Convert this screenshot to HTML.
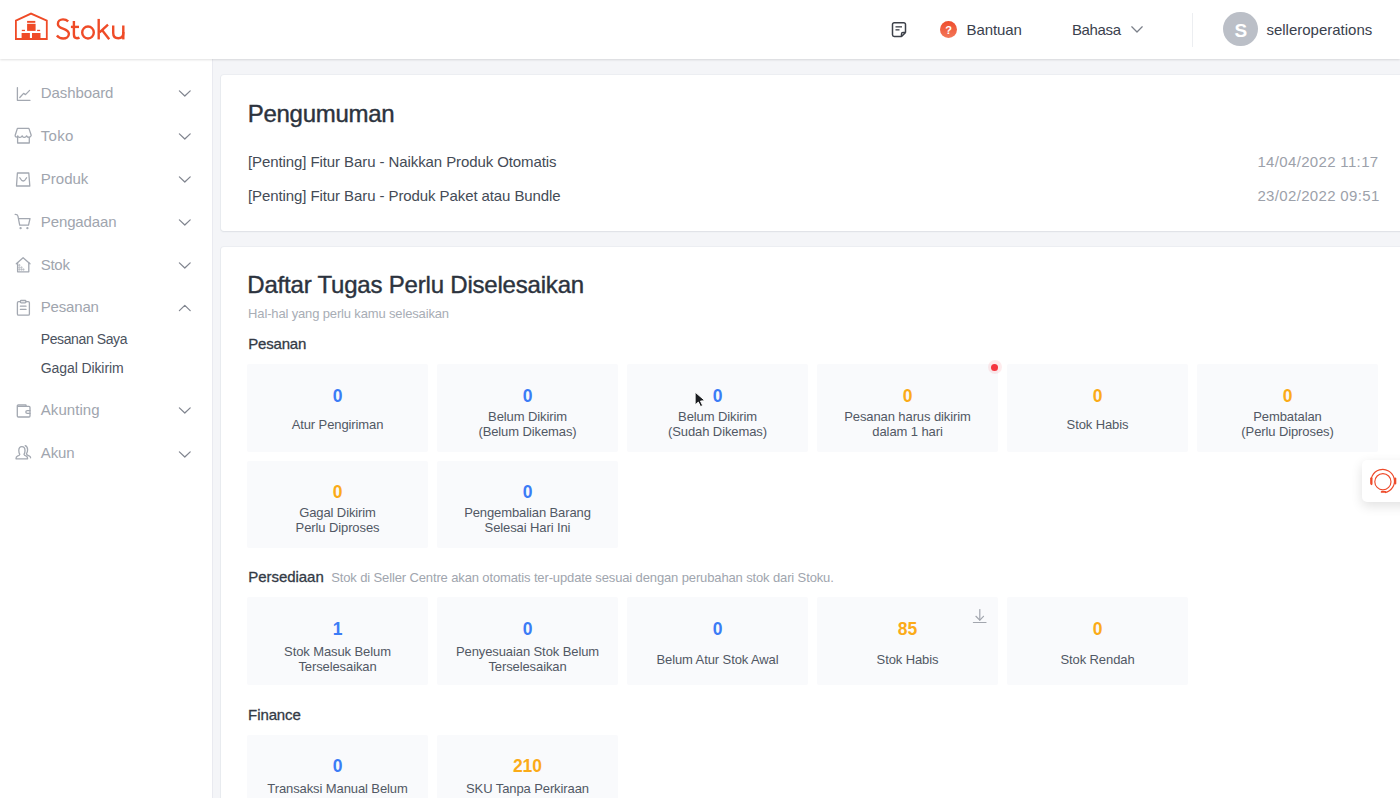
<!DOCTYPE html>
<html><head><meta charset="utf-8"><title>Stoku</title>
<style>
*{box-sizing:border-box;margin:0;padding:0}
html,body{width:1400px;height:798px;overflow:hidden;background:#f4f5f8;font-family:"Liberation Sans",sans-serif}
.t{position:absolute;white-space:nowrap;line-height:1}
.a{position:absolute}
.hdr{position:absolute;left:0;top:0;width:1400px;height:59px;background:#fff;box-shadow:0 1px 2px rgba(0,0,0,0.12);z-index:5}
.side{position:absolute;left:0;top:59px;width:213px;height:739px;background:#fff;border-right:1px solid #e9eaf0;z-index:3}
.card{position:absolute;background:#fff;border-radius:3px;box-shadow:0 0 0 1px rgba(40,50,80,0.035),0 1px 2px rgba(40,50,70,0.07)}
.tile{position:absolute;background:#f9fafc;border-radius:2px}
.num{position:absolute;left:0;width:100%;text-align:center;font-size:17.5px;font-weight:bold;line-height:1;white-space:nowrap}
.lb{position:absolute;left:0;width:100%;text-align:center;font-size:13px;line-height:15px;color:#515864;letter-spacing:-0.1px;white-space:nowrap}
.blue{color:#3b7cf6}.orange{color:#fbab18}
.ic{position:absolute;fill:none;stroke:#a3a8b1;stroke-width:1.3;stroke-linecap:round;stroke-linejoin:round}
.chev{position:absolute;fill:none;stroke:#80858f;stroke-width:1.25;stroke-linecap:round;stroke-linejoin:round}
</style></head><body>
<div class="hdr">
<svg class="a" style="left:12px;top:10px" width="40" height="34" viewBox="12 10 40 34">
<path d="M15.9 39 V20.6 L31 13.6 L46.8 20.6 V39 Z" fill="none" stroke="#ef4b27" stroke-width="1.8" stroke-linejoin="miter"/>
<rect x="27.1" y="20.9" width="8.2" height="1.9" fill="#ef4b27"/>
<rect x="27.1" y="23.8" width="8.5" height="7.1" fill="#ef4b27"/>
<rect x="21.8" y="29.8" width="3.2" height="1.3" fill="#ef4b27"/>
<rect x="37.1" y="29.8" width="3" height="1.3" fill="#ef4b27"/>
<rect x="21.6" y="33" width="8.3" height="6.5" fill="#ef4b27"/>
<rect x="32" y="33" width="8.5" height="6.5" fill="#ef4b27"/>
</svg>
<svg class="a" style="left:52px;top:14px" width="76" height="30" viewBox="52 14 76 30" fill="none" stroke="#ef4b27" stroke-width="2.4">
<path d="M68.2 21.4 C66.6 19.9 64.9 19.4 63 19.4 C60 19.4 57.9 21.3 57.9 23.9 C57.9 26.6 60.2 27.6 63 28.6 C66.2 29.7 68.9 30.8 68.9 33.8 C68.9 36.7 66.3 38.5 63.2 38.5 C60.6 38.5 58.3 37.3 56.9 35.5"/>
<path d="M73.9 20.9 V34.6 Q73.9 38.3 77 38.3 Q78.4 38.3 79.4 37.6"/><path d="M70.9 26.9 H79"/>
<ellipse cx="88" cy="32.5" rx="5.8" ry="6"/>
<path d="M98.7 18.9 V39.4"/><path d="M108 24.6 L99.6 32.4"/><path d="M102.4 30.6 L109.2 39.2"/>
<path d="M113.2 25.6 V33 Q113.2 38.3 118.3 38.3 Q123.3 38.3 123.3 33 V25.6"/><path d="M123.3 32 V39.4"/>
</svg>
<svg class="a" style="left:890px;top:20px" width="18" height="19" viewBox="890 20 18 19">
<path d="M894.2 22.7 H903.8 A1.7 1.7 0 0 1 905.5 24.4 V32.3 L901.3 36.5 H894.2 A1.7 1.7 0 0 1 892.5 34.8 V24.4 A1.7 1.7 0 0 1 894.2 22.7 Z" fill="none" stroke="#3c4049" stroke-width="1.5"/>
<path d="M905.3 32.5 H903 A1.6 1.6 0 0 0 901.4 34.1 V36.3" fill="#fff" stroke="#3c4049" stroke-width="1.3" stroke-linejoin="round"/><path d="M905.2 32.7 L901.6 36.3" stroke="#3c4049" stroke-width="1.4"/>
<rect x="895.5" y="26.2" width="6.5" height="1.3" fill="#3c4049"/>
<rect x="895.5" y="29.2" width="4" height="1.3" fill="#3c4049"/>
</svg>
<div class="a" style="left:939.5px;top:20.8px;width:17.2px;height:17.2px;border-radius:50%;background:linear-gradient(#ee4c2c,#f3785a)"></div>
<div class="t" style="left:945.20px;top:24.59px;font-size:11px;color:#fff;font-weight:bold;">?</div>
<div class="t" style="left:966.50px;top:22.30px;font-size:15px;color:#3a414d;letter-spacing:-0.1px;">Bantuan</div>
<div class="t" style="left:1071.90px;top:22.30px;font-size:15px;color:#3a414d;letter-spacing:-0.35px;">Bahasa</div>
<svg class="chev" style="left:1130px;top:24px;stroke:#7a7f89" width="14" height="10" viewBox="1130 24 14 10"><path d="M1131.8 26.8 L1137 32 L1142.2 26.8"/></svg>
<div class="a" style="left:1192px;top:13px;width:1px;height:34px;background:#eceef1"></div>
<div class="a" style="left:1223.2px;top:11.6px;width:34.6px;height:34.6px;border-radius:50%;background:#bbbfc7"></div>
<div class="t" style="left:1234.60px;top:20.72px;font-size:19px;color:#fff;font-weight:bold;">S</div>
<div class="t" style="left:1266.40px;top:22.30px;font-size:15px;color:#3a414d;">selleroperations</div>
</div>
<div class="side">
</div>
<div class="a" style="left:0;top:0;z-index:4">
<div class="t" style="left:40.80px;top:84.90px;font-size:15px;color:#a0a5ae;letter-spacing:-0.1px;">Dashboard</div>
<svg class="chev" style="left:177px;top:89.2px" width="16" height="9" viewBox="177 89.2 16 9"><path d="M179.4 91.1 L184.8 96.2 L190.2 91.1"/></svg>
<div class="t" style="left:40.80px;top:127.70px;font-size:15px;color:#a0a5ae;letter-spacing:0.3px;">Toko</div>
<svg class="chev" style="left:177px;top:132.0px" width="16" height="9" viewBox="177 132.0 16 9"><path d="M179.4 133.9 L184.8 139.0 L190.2 133.9"/></svg>
<div class="t" style="left:40.80px;top:170.60px;font-size:15px;color:#a0a5ae;">Produk</div>
<svg class="chev" style="left:177px;top:174.9px" width="16" height="9" viewBox="177 174.9 16 9"><path d="M179.4 176.8 L184.8 181.9 L190.2 176.8"/></svg>
<div class="t" style="left:40.80px;top:213.50px;font-size:15px;color:#a0a5ae;letter-spacing:-0.12px;">Pengadaan</div>
<svg class="chev" style="left:177px;top:217.8px" width="16" height="9" viewBox="177 217.8 16 9"><path d="M179.4 219.7 L184.8 224.8 L190.2 219.7"/></svg>
<div class="t" style="left:40.80px;top:256.60px;font-size:15px;color:#a0a5ae;letter-spacing:-0.3px;">Stok</div>
<svg class="chev" style="left:177px;top:260.9px" width="16" height="9" viewBox="177 260.9 16 9"><path d="M179.4 262.8 L184.8 267.9 L190.2 262.8"/></svg>
<div class="t" style="left:40.80px;top:299.40px;font-size:15px;color:#a0a5ae;letter-spacing:-0.18px;">Pesanan</div>
<svg class="chev" style="left:177px;top:303.7px" width="16" height="9" viewBox="177 303.7 16 9"><path d="M179.4 310.3 L184.8 305.1 L190.2 310.3"/></svg>
<div class="t" style="left:40.80px;top:402.00px;font-size:15px;color:#a0a5ae;letter-spacing:0.05px;">Akunting</div>
<svg class="chev" style="left:177px;top:406.3px" width="16" height="9" viewBox="177 406.3 16 9"><path d="M179.4 408.2 L184.8 413.3 L190.2 408.2"/></svg>
<div class="t" style="left:40.80px;top:445.30px;font-size:15px;color:#a0a5ae;letter-spacing:-0.15px;">Akun</div>
<svg class="chev" style="left:177px;top:449.6px" width="16" height="9" viewBox="177 449.6 16 9"><path d="M179.4 451.5 L184.8 456.6 L190.2 451.5"/></svg>
<div class="t" style="left:40.80px;top:332.15px;font-size:14px;color:#4b525e;letter-spacing:-0.4px;">Pesanan Saya</div>
<div class="t" style="left:40.80px;top:361.15px;font-size:14px;color:#4b525e;letter-spacing:-0.1px;">Gagal Dikirim</div>
<svg class="ic" style="left:12px;top:82px" width="24" height="24" viewBox="12 82 24 24"><path d="M17.4 87.6 V100.3 H30"/><path d="M19.8 97.5 L23.6 93.4 L25.5 94.6 L29.6 90.4"/></svg>
<svg class="ic" style="left:12px;top:124px" width="24" height="24" viewBox="12 124 24 24"><path d="M17.4 128.4 H28.9 L31.2 135.3 Q30.8 137.4 28.6 137.2 Q27.2 137.4 26.6 135.8 Q25.6 137.6 24.2 137.4 Q22.8 137.6 22.2 135.8 Q21.2 137.6 19.8 137.4 Q18.2 137.6 17.8 135.8 Q17 137.6 15.6 136.8 Q15 136 15.2 135.3 Z"/><path d="M17.6 137.3 V143 H29.3 V137.3"/></svg>
<svg class="ic" style="left:12px;top:167px" width="24" height="24" viewBox="12 167 24 24"><path d="M17.4 173 H28.8 L29.8 186 H16.5 Z"/><path d="M19.8 177.8 Q23.2 184.2 26.6 177.8"/></svg>
<svg class="ic" style="left:12px;top:210px" width="24" height="24" viewBox="12 210 24 24"><path d="M15.2 214.4 Q17.6 214.4 17.9 216 L19.7 225.2 H28.5 L30 218.6 H18.4"/><circle cx="20.6" cy="228.2" r="0.5"/><circle cx="27.4" cy="228.2" r="0.5"/></svg>
<svg class="ic" style="left:12px;top:253px" width="24" height="24" viewBox="12 253 24 24"><path d="M16.3 263.7 L23.1 257.7 L30 263.7"/><path d="M17.6 262.6 V271.8 H28.8 V262.6"/><circle cx="19.4" cy="265.3" r="0.3"/><circle cx="19.4" cy="267.4" r="0.3"/><circle cx="21.5" cy="267.4" r="0.3"/><circle cx="19.4" cy="269.5" r="0.3"/><circle cx="21.5" cy="269.5" r="0.3"/><circle cx="23.5" cy="269.5" r="0.3"/></svg>
<svg class="ic" style="left:12px;top:296px" width="24" height="24" viewBox="12 296 24 24"><path d="M20.3 301.6 H18.6 Q17.4 301.6 17.4 302.8 V313.9 Q17.4 315.1 18.6 315.1 H28.2 Q29.4 315.1 29.4 313.9 V302.8 Q29.4 301.6 28.2 301.6 H26"/><rect x="20.4" y="300.5" width="5.5" height="2.3" rx="0.8"/><path d="M20.4 306.2 H26"/><path d="M20.4 309.4 H26"/></svg>
<svg class="ic" style="left:12px;top:398px" width="24" height="24" viewBox="12 398 24 24"><path d="M26.3 406.3 L25.8 404.8 H18.3 Q17.3 404.8 17.3 405.8 V415.9 Q17.3 417 18.4 417 H29 Q30 417 30 416 V407.4 Q30 406.4 29 406.4 H17.6"/><path d="M30 410.6 H27.4 Q25.8 410.6 25.8 412 Q25.8 413.4 27.4 413.4 H30"/></svg>
<svg class="ic" style="left:12px;top:441px" width="24" height="24" viewBox="12 441 24 24"><path d="M19.8 454.4 Q18.8 453 18.8 450.6 Q18.8 446.6 21.9 446.6 Q25 446.6 25 450.6 Q25 453 24 454.4 Q24.2 455.4 26.4 456.2 Q27.6 456.8 27.6 458.8 H16 Q16 456.8 17.4 456.2 Q19.6 455.4 19.8 454.4 Z"/><path d="M25.2 445.6 Q27.6 446.3 27.6 449.8 Q27.6 452.2 26.4 453.8 Q26.8 455.2 29 455.8 Q30.5 456.6 30.6 457.8"/></svg>
</div>
<div class="card" style="left:221px;top:75px;width:1200px;height:155.8px"></div>
<div class="t" style="left:247.80px;top:102.08px;font-size:24px;color:#2c333e;letter-spacing:-0.3px;-webkit-text-stroke:0.4px #2c333e;">Pengumuman</div>
<div class="t" style="left:248.00px;top:154.40px;font-size:15px;color:#444b56;letter-spacing:-0.09px;">[Penting] Fitur Baru - Naikkan Produk Otomatis</div>
<div class="t" style="left:248.00px;top:187.90px;font-size:15px;color:#444b56;letter-spacing:-0.09px;">[Penting] Fitur Baru - Produk Paket atau Bundle</div>
<div class="t" style="left:1257.40px;top:154.10px;font-size:15px;color:#9ca1aa;letter-spacing:0.34px;">14/04/2022 11:17</div>
<div class="t" style="left:1257.40px;top:187.70px;font-size:15px;color:#9ca1aa;letter-spacing:0.34px;">23/02/2022 09:51</div>
<div class="card" style="left:221px;top:246.6px;width:1200px;height:700px"></div>
<div class="t" style="left:247.30px;top:272.98px;font-size:24px;color:#2c333e;letter-spacing:-0.2px;-webkit-text-stroke:0.4px #2c333e;">Daftar Tugas Perlu Diselesaikan</div>
<div class="t" style="left:248.10px;top:306.90px;font-size:13px;color:#a8adb5;letter-spacing:-0.15px;">Hal-hal yang perlu kamu selesaikan</div>
<div class="t" style="left:248.30px;top:336.40px;font-size:15px;color:#333a45;letter-spacing:-0.2px;-webkit-text-stroke:0.3px #333a45;">Pesanan</div>
<div class="t" style="left:248.30px;top:569.40px;font-size:15px;color:#333a45;letter-spacing:-0.05px;-webkit-text-stroke:0.3px #333a45;">Persediaan</div>
<div class="t" style="left:331.20px;top:570.90px;font-size:13px;color:#a0a5ae;letter-spacing:-0.13px;">Stok di Seller Centre akan otomatis ter-update sesuai dengan perubahan stok dari Stoku.</div>
<div class="t" style="left:248.10px;top:706.60px;font-size:15px;color:#333a45;letter-spacing:-0.1px;-webkit-text-stroke:0.3px #333a45;">Finance</div>
<div class="tile" style="left:247.00px;top:364.2px;width:181.0px;height:87.6px"><div class="num blue" style="top:23.43px">0</div><div class="lb" style="top:52.70px">Atur Pengiriman</div></div>
<div class="tile" style="left:437.00px;top:364.2px;width:181.0px;height:87.6px"><div class="num blue" style="top:23.43px">0</div><div class="lb" style="top:44.50px">Belum Dikirim<br>(Belum Dikemas)</div></div>
<div class="tile" style="left:627.00px;top:364.2px;width:181.0px;height:87.6px"><div class="num blue" style="top:23.43px">0</div><div class="lb" style="top:44.50px">Belum Dikirim<br>(Sudah Dikemas)</div></div>
<div class="tile" style="left:817.00px;top:364.2px;width:181.0px;height:87.6px"><div class="num orange" style="top:23.43px">0</div><div class="lb" style="top:44.50px">Pesanan harus dikirim<br>dalam 1 hari</div></div>
<div class="tile" style="left:1007.00px;top:364.2px;width:181.0px;height:87.6px"><div class="num orange" style="top:23.43px">0</div><div class="lb" style="top:52.70px">Stok Habis</div></div>
<div class="tile" style="left:1197.00px;top:364.2px;width:181.0px;height:87.6px"><div class="num orange" style="top:23.43px">0</div><div class="lb" style="top:44.50px">Pembatalan<br>(Perlu Diproses)</div></div>
<div class="a" style="left:987.7px;top:360.3px;width:14px;height:14px;border-radius:50%;background:rgba(245,60,70,0.10)"></div>
<div class="a" style="left:991.2px;top:363.8px;width:7px;height:7px;border-radius:50%;background:#f5363f"></div>
<div class="tile" style="left:247.00px;top:461px;width:181.0px;height:87px"><div class="num orange" style="top:23.03px">0</div><div class="lb" style="top:43.70px">Gagal Dikirim<br>Perlu Diproses</div></div>
<div class="tile" style="left:437.00px;top:461px;width:181.0px;height:87px"><div class="num blue" style="top:23.03px">0</div><div class="lb" style="top:43.70px">Pengembalian Barang<br>Selesai Hari Ini</div></div>
<div class="tile" style="left:247.00px;top:597px;width:181.0px;height:88px"><div class="num blue" style="top:23.52px">1</div><div class="lb" style="top:47.00px">Stok Masuk Belum<br>Terselesaikan</div></div>
<div class="tile" style="left:437.00px;top:597px;width:181.0px;height:88px"><div class="num blue" style="top:23.52px">0</div><div class="lb" style="top:47.00px">Penyesuaian Stok Belum<br>Terselesaikan</div></div>
<div class="tile" style="left:627.00px;top:597px;width:181.0px;height:88px"><div class="num blue" style="top:23.52px">0</div><div class="lb" style="top:55.30px">Belum Atur Stok Awal</div></div>
<div class="tile" style="left:817.00px;top:597px;width:181.0px;height:88px"><div class="num orange" style="top:23.52px">85</div><div class="lb" style="top:55.30px">Stok Habis</div></div>
<div class="tile" style="left:1007.00px;top:597px;width:181.0px;height:88px"><div class="num orange" style="top:23.52px">0</div><div class="lb" style="top:55.30px">Stok Rendah</div></div>
<svg class="a" style="left:970px;top:606px" width="20" height="20" viewBox="970 606 20 20" fill="none" stroke="#a2a6ae" stroke-width="1.2" stroke-linecap="round"><path d="M979.8 609.6 V620"/><path d="M975.9 616.3 L979.8 620.1 L983.5 616.3"/><path d="M973.4 622.5 H986"/></svg>
<div class="tile" style="left:247.00px;top:734.7px;width:181.0px;height:88px"><div class="num blue" style="top:23.62px">0</div><div class="lb" style="top:46.20px">Transaksi Manual Belum<br>Terselesaikan</div></div>
<div class="tile" style="left:437.00px;top:734.7px;width:181.0px;height:88px"><div class="num orange" style="top:23.62px">210</div><div class="lb" style="top:46.20px">SKU Tanpa Perkiraan<br>Pendapatan</div></div>
<div class="a" style="left:1361.8px;top:460.2px;width:60px;height:42.3px;background:#fff;border-radius:5px;box-shadow:0 4px 12px rgba(0,0,0,0.12);z-index:6"></div>
<svg class="a" style="left:1366px;top:464px;z-index:7" width="34" height="34" viewBox="1366 464 34 34" fill="none" stroke="#ee4a2a" stroke-width="1.15" stroke-linecap="butt">
<path d="M1371.7 485 A11.7 11.7 0 1 1 1385 492.6"/>
<circle cx="1382.9" cy="481.7" r="8.1"/>
<path d="M1371.4 478.3 V483.7" stroke-width="2.2" stroke-linecap="round"/>
<path d="M1395.2 478.5 V483.5" stroke-width="2.2" stroke-linecap="round"/>
<path d="M1381.6 491.9 H1385.4" stroke-width="1.7" stroke-linecap="round"/>
</svg>
<svg class="a" style="left:690px;top:388px;z-index:8" width="20" height="22" viewBox="690 388 20 22">
<path d="M695.1 392.1 V405 L698.3 402.1 L700.5 406.6 L702.7 405.6 L700.5 401.1 L705 400.7 Z" fill="#1b1d21" stroke="#fff" stroke-width="1" stroke-linejoin="miter"/>
</svg>
</body></html>
